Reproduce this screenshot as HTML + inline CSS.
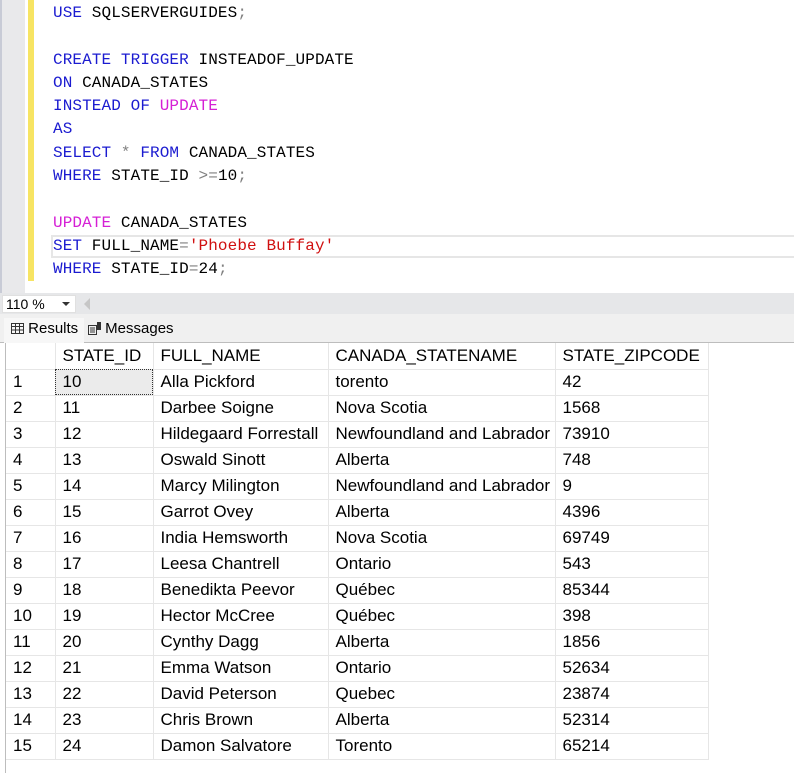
<!DOCTYPE html>
<html><head><style>
*{margin:0;padding:0;box-sizing:border-box}
body{width:794px;height:773px;overflow:hidden;background:#fff;position:relative;font-family:"Liberation Sans",Arial,sans-serif}
#gut{position:absolute;left:0;top:0;width:25px;height:293px;background:#e9e9eb;border-left:2px solid #c8cbd6}
#yel{position:absolute;left:28px;top:0;width:6px;height:281px;background:#f7e463}
#code{position:absolute;left:53px;top:2px;font-family:"Liberation Mono",monospace;font-size:16px;letter-spacing:0.1px;line-height:23.3px;white-space:pre;color:#000}
.k{color:#1b1bd0}.m{color:#d51fd5}.g{color:#808080}.s{color:#d01010}
#cur{position:absolute;left:51px;top:235px;width:743px;height:23px;border:2px solid #e6e6e6;border-right:none}
#bar{position:absolute;left:0;top:293px;width:794px;height:21px;background:#e6e7e9}
#combo{position:absolute;left:2px;top:295px;width:74px;height:18px;background:#fff;border:1px solid #e0e0e0;font-size:14px;line-height:16px;padding-left:3px}
#combo span{position:absolute;right:5px;top:6px;border-left:4px solid transparent;border-right:4px solid transparent;border-top:4px solid #333}
#arr{position:absolute;left:84px;top:298px;border-top:6px solid transparent;border-bottom:6px solid transparent;border-right:6px solid #c6c6c6}
#tabs{position:absolute;left:0;top:314px;width:794px;height:29px;background:#f0f0f0;border-bottom:1px solid #bdbdbd}
.tab{position:absolute;top:4px;height:25px;font-size:15px;line-height:22px}
#grid{position:absolute;left:5px;top:343px;width:789px;height:430px;border-left:1px solid #bdbdbd;background:#fff}
table{border-collapse:collapse;font-size:17px;position:absolute;left:0;top:0;table-layout:fixed}
td{height:26px;border-right:1px solid #e6e6e6;border-bottom:1px solid #e6e6e6;padding:0 0 0 7px;white-space:nowrap;color:#000;overflow:hidden}
</style></head><body>
<div id="gut"></div><div id="yel"></div>
<div id="cur"></div>
<div id="code"><span class="k">USE</span> SQLSERVERGUIDES<span class="g">;</span>

<span class="k">CREATE TRIGGER</span> INSTEADOF_UPDATE
<span class="k">ON</span> CANADA_STATES
<span class="k">INSTEAD OF</span> <span class="m">UPDATE</span>
<span class="k">AS</span>
<span class="k">SELECT</span> <span class="g">*</span> <span class="k">FROM</span> CANADA_STATES
<span class="k">WHERE</span> STATE_ID <span class="g">&gt;=</span>10<span class="g">;</span>

<span class="m">UPDATE</span> CANADA_STATES
<span class="k">SET</span> FULL_NAME<span class="g">=</span><span class="s">'Phoebe Buffay'</span>
<span class="k">WHERE</span> STATE_ID<span class="g">=</span>24<span class="g">;</span></div>
<div id="bar"></div>
<div id="combo">110 %<span></span></div>
<div id="arr"></div>
<div id="tabs">
<div class="tab" style="left:4px;width:80px;background:#f7f7f7;padding-left:7px"><svg width="13" height="11" style="vertical-align:-1px"><rect x="0.5" y="0.5" width="12" height="10" fill="none" stroke="#333"/><path d="M0 3.5H13M0 7H13M4.5 0V11M8.5 0V11" stroke="#333"/></svg> Results</div>
<div class="tab" style="left:88px;width:92px"><svg width="13" height="13" style="vertical-align:-2px"><rect x="0.5" y="3.5" width="8" height="9" fill="none" stroke="#333"/><path d="M2 6H7M2 8H7M2 10H7" stroke="#333"/><rect x="9" y="0" width="4" height="8" fill="#333"/></svg> Messages</div>
</div>
<div id="grid"><table>
<colgroup><col style="width:49px"><col style="width:98px"><col style="width:175px"><col style="width:227px"><col style="width:153px"></colgroup>
<tr><td></td><td>STATE_ID</td><td>FULL_NAME</td><td>CANADA_STATENAME</td><td>STATE_ZIPCODE</td></tr>
<tr><td>1</td><td style="background:#ebebeb;outline:1px dotted #333;outline-offset:-1px">10</td><td>Alla Pickford</td><td>torento</td><td>42</td></tr>
<tr><td>2</td><td>11</td><td>Darbee Soigne</td><td>Nova Scotia</td><td>1568</td></tr>
<tr><td>3</td><td>12</td><td>Hildegaard Forrestall</td><td>Newfoundland and Labrador</td><td>73910</td></tr>
<tr><td>4</td><td>13</td><td>Oswald Sinott</td><td>Alberta</td><td>748</td></tr>
<tr><td>5</td><td>14</td><td>Marcy Milington</td><td>Newfoundland and Labrador</td><td>9</td></tr>
<tr><td>6</td><td>15</td><td>Garrot Ovey</td><td>Alberta</td><td>4396</td></tr>
<tr><td>7</td><td>16</td><td>India Hemsworth</td><td>Nova Scotia</td><td>69749</td></tr>
<tr><td>8</td><td>17</td><td>Leesa Chantrell</td><td>Ontario</td><td>543</td></tr>
<tr><td>9</td><td>18</td><td>Benedikta Peevor</td><td>Québec</td><td>85344</td></tr>
<tr><td>10</td><td>19</td><td>Hector McCree</td><td>Québec</td><td>398</td></tr>
<tr><td>11</td><td>20</td><td>Cynthy Dagg</td><td>Alberta</td><td>1856</td></tr>
<tr><td>12</td><td>21</td><td>Emma Watson</td><td>Ontario</td><td>52634</td></tr>
<tr><td>13</td><td>22</td><td>David Peterson</td><td>Quebec</td><td>23874</td></tr>
<tr><td>14</td><td>23</td><td>Chris Brown</td><td>Alberta</td><td>52314</td></tr>
<tr><td>15</td><td>24</td><td>Damon Salvatore</td><td>Torento</td><td>65214</td></tr>
</table></div>
</body></html>
